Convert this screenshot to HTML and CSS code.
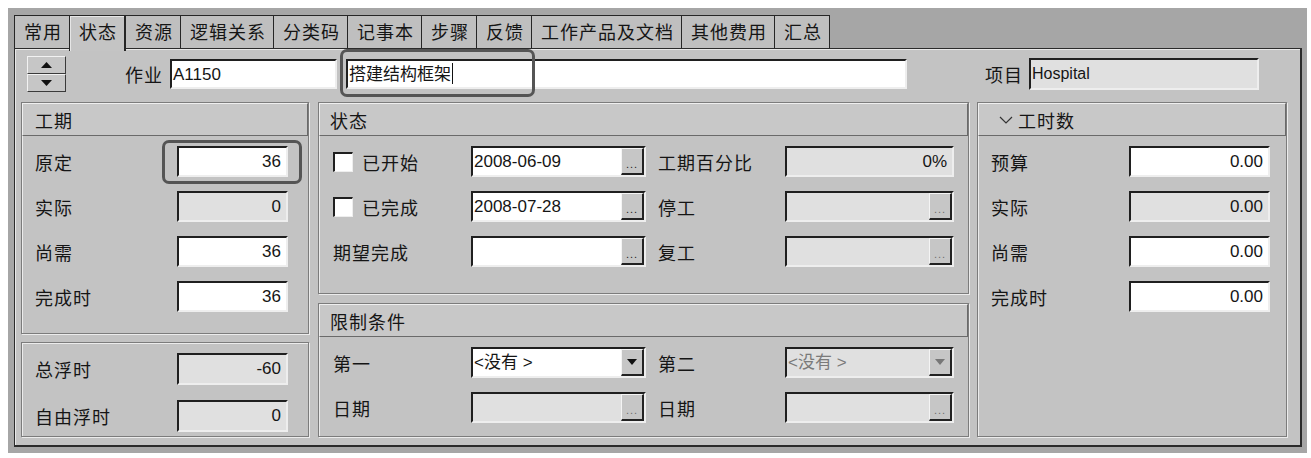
FILE: index.html
```html
<!DOCTYPE html>
<html lang="zh-CN">
<head>
    <meta charset="UTF-8">
    <meta name="viewport" content="width=device-width, initial-scale=1.0">
    <title>作业详情 - 状态</title>
    <link rel="stylesheet" href="styles.css">
</head>
<body>
    <div class="window">
        <div class="tabs">
            <div class="tab">常用</div>
            <div class="tab active">状态</div>
            <div class="tab">资源</div>
            <div class="tab">逻辑关系</div>
            <div class="tab">分类码</div>
            <div class="tab">记事本</div>
            <div class="tab">步骤</div>
            <div class="tab">反馈</div>
            <div class="tab">工作产品及文档</div>
            <div class="tab">其他费用</div>
            <div class="tab">汇总</div>
        </div>

        <div class="panel">
            <div class="topbar">
                <div class="spin">
                    <div class="spin-btn">
                        <svg width="11" height="6" viewBox="0 0 11 6"><polygon points="5.5,0 11,6 0,6" fill="#111"/></svg>
                    </div>
                    <div class="spin-btn">
                        <svg width="11" height="6" viewBox="0 0 11 6"><polygon points="0,0 11,0 5.5,6" fill="#111"/></svg>
                    </div>
                </div>
                <span class="lbl-job">作业</span>
                <div class="field f-id"><span class="val">A1150</span></div>
                <div class="field f-name">
                    <span class="val cjk">搭建结构框架<span class="caret"></span></span>
                    <div class="mark mark-name"></div>
                </div>
                <span class="lbl-proj">项目</span>
                <div class="field disabled f-proj"><span class="val">Hospital</span></div>
            </div>

            <div class="groups">
                <!-- left column -->
                <div class="col col-left">
                    <section class="group g-dur">
                        <div class="group-head">工期</div>
                        <div class="rows">
                            <div class="row">
                                <span class="lbl">原定</span>
                                <div class="field num">
                                    <span class="val">36</span>
                                    <div class="mark mark-dur"></div>
                                </div>
                            </div>
                            <div class="row">
                                <span class="lbl">实际</span>
                                <div class="field num disabled"><span class="val">0</span></div>
                            </div>
                            <div class="row">
                                <span class="lbl">尚需</span>
                                <div class="field num"><span class="val">36</span></div>
                            </div>
                            <div class="row">
                                <span class="lbl">完成时</span>
                                <div class="field num"><span class="val">36</span></div>
                            </div>
                        </div>
                    </section>
                    <section class="group g-float">
                        <div class="rows rows-float">
                            <div class="row">
                                <span class="lbl">总浮时</span>
                                <div class="field num disabled"><span class="val">-60</span></div>
                            </div>
                            <div class="row">
                                <span class="lbl">自由浮时</span>
                                <div class="field num disabled"><span class="val">0</span></div>
                            </div>
                        </div>
                    </section>
                </div>

                <!-- middle column -->
                <div class="col col-mid">
                    <section class="group g-status">
                        <div class="group-head">状态</div>
                        <div class="rows">
                            <div class="row">
                                <span class="lbl"><span class="check"></span>已开始</span>
                                <div class="field date">
                                    <span class="val">2008-06-09</span>
                                    <span class="dots">...</span>
                                </div>
                                <span class="lbl2">工期百分比</span>
                                <div class="field side num disabled"><span class="val">0%</span></div>
                            </div>
                            <div class="row">
                                <span class="lbl"><span class="check"></span>已完成</span>
                                <div class="field date">
                                    <span class="val">2008-07-28</span>
                                    <span class="dots">...</span>
                                </div>
                                <span class="lbl2">停工</span>
                                <div class="field side disabled">
                                    <span class="val"></span>
                                    <span class="dots off">...</span>
                                </div>
                            </div>
                            <div class="row">
                                <span class="lbl">期望完成</span>
                                <div class="field date">
                                    <span class="val"></span>
                                    <span class="dots">...</span>
                                </div>
                                <span class="lbl2">复工</span>
                                <div class="field side disabled">
                                    <span class="val"></span>
                                    <span class="dots off">...</span>
                                </div>
                            </div>
                        </div>
                    </section>
                    <section class="group g-limit">
                        <div class="group-head">限制条件</div>
                        <div class="rows">
                            <div class="row">
                                <span class="lbl">第一</span>
                                <div class="field date">
                                    <span class="val cjk">&lt;没有 &gt;</span>
                                    <span class="drop">
                                        <svg width="10" height="6" viewBox="0 0 10 6"><polygon points="0,0 10,0 5,6" fill="#111"/></svg>
                                    </span>
                                </div>
                                <span class="lbl2">第二</span>
                                <div class="field side disabled">
                                    <span class="val cjk muted">&lt;没有 &gt;</span>
                                    <span class="drop">
                                        <svg width="10" height="6" viewBox="0 0 10 6"><polygon points="0,0 10,0 5,6" fill="#777"/></svg>
                                    </span>
                                </div>
                            </div>
                            <div class="row">
                                <span class="lbl">日期</span>
                                <div class="field date disabled">
                                    <span class="val"></span>
                                    <span class="dots off">...</span>
                                </div>
                                <span class="lbl2">日期</span>
                                <div class="field side disabled">
                                    <span class="val"></span>
                                    <span class="dots off">...</span>
                                </div>
                            </div>
                        </div>
                    </section>
                </div>

                <!-- right column -->
                <div class="col col-right">
                    <section class="group g-hours">
                        <div class="group-head">
                            <svg class="chev" width="14" height="8" viewBox="0 0 14 8"><polyline points="1,1 7,7 13,1" fill="none" stroke="#333" stroke-width="1.2"/></svg>工时数
                        </div>
                        <div class="rows">
                            <div class="row">
                                <span class="lbl">预算</span>
                                <div class="field num"><span class="val">0.00</span></div>
                            </div>
                            <div class="row">
                                <span class="lbl">实际</span>
                                <div class="field num disabled"><span class="val">0.00</span></div>
                            </div>
                            <div class="row">
                                <span class="lbl">尚需</span>
                                <div class="field num"><span class="val">0.00</span></div>
                            </div>
                            <div class="row">
                                <span class="lbl">完成时</span>
                                <div class="field num"><span class="val">0.00</span></div>
                            </div>
                        </div>
                    </section>
                </div>
            </div>
        </div>
    </div>
</body>
</html>
```

FILE: styles.css
```css
body {
    margin: 0;
    background-color: #fff;
    font-family: "Noto Sans CJK SC", sans-serif;
    color: #151515;
}
.window {
    margin: 8px 0 0 8px;
    width: 1299px;
    height: 445px;
    box-sizing: border-box;
    padding: 7px 5px 6px 6px;
    background-color: #a6a6a6;
}

/* tab strip */
.tabs {
    display: flex;
    align-items: flex-start;
    height: 33px;
}
.tab {
    height: 33px;
    box-sizing: border-box;
    padding: 0 7px 0 9px;
    margin-right: -1px;
    border: 1px solid #262626;
    border-bottom: none;
    background-color: #bfbfbf;
    font-size: 18px;
    letter-spacing: 1px;
    line-height: 31px;
}
.tab.active {
    position: relative;
    z-index: 1;
    height: 36px;
    background-color: #c4c4c4;
    border-right-width: 2px;
    box-shadow: inset 1px 1px 0 #e6e6e6;
}

/* main page */
.panel {
    height: 399px;
    box-sizing: border-box;
    border: 1px solid #2b2b2b;
    border-right-width: 2px;
    border-bottom-width: 2px;
    background-color: #c3c3c3;
    box-shadow: inset 1px 1px 0 #e8e8e8;
}
.topbar {
    display: flex;
    align-items: center;
    height: 49px;
}
.spin {
    margin-left: 12px;
    width: 39px;
    height: 36px;
    display: flex;
    flex-direction: column;
}
.spin-btn {
    flex: 1;
    display: flex;
    align-items: center;
    justify-content: center;
    background-color: #c6c6c6;
    border-top: 1px solid #f2f2f2;
    border-left: 1px solid #f2f2f2;
    border-right: 1px solid #3a3a3a;
    border-bottom: 1px solid #3a3a3a;
}
.lbl-job {
    margin-left: 59px;
    width: 45px;
    font-size: 18px;
    letter-spacing: 1px;
}
.lbl-proj {
    margin-left: 78px;
    width: 44px;
    font-size: 18px;
    letter-spacing: 1px;
}

/* sunken edit boxes */
.field {
    position: relative;
    display: flex;
    box-sizing: border-box;
    height: 31px;
    background-color: #fff;
    border-top: 2px solid #1f1f1f;
    border-left: 2px solid #1f1f1f;
    border-right: 2px solid #eeeeee;
    border-bottom: 2px solid #eeeeee;
    font-family: "Liberation Sans", "Noto Sans CJK SC", sans-serif;
    font-size: 17px;
    line-height: 27px;
}
.field .val {
    flex: 1;
    padding: 0 4px 0 1px;
    white-space: nowrap;
    overflow: hidden;
}
.field.num .val {
    text-align: right;
    padding-right: 5px;
}
.field.disabled {
    background-color: #e0e0e0;
}
.field .cjk {
    font-size: 17px;
}
.field .muted {
    color: #7a7a7a;
}
.f-id {
    width: 167px;
    height: 30px;
}
.f-name {
    margin-left: 9px;
    width: 561px;
    height: 30px;
}
.f-proj {
    width: 230px;
    height: 32px;
    font-size: 16px;
}
.caret {
    display: inline-block;
    width: 1px;
    height: 21px;
    margin-left: 1px;
    vertical-align: -4px;
    background-color: #111;
}

/* small buttons inside boxes */
.dots,
.drop {
    width: 23px;
    box-sizing: border-box;
    display: flex;
    justify-content: center;
    background-color: #c6c6c6;
    border-top: 1px solid #f4f4f4;
    border-left: 1px solid #f4f4f4;
    border-right: 2px solid #222;
    border-bottom: 2px solid #222;
}
.dots {
    align-items: flex-end;
    font-size: 11px;
    line-height: 1;
    letter-spacing: 1px;
    padding-bottom: 3px;
    color: #222;
}
.dots.off {
    color: #6e6e6e;
}
.drop {
    align-items: center;
}

/* annotation outlines */
.mark {
    position: absolute;
    border: 3px solid #555;
    border-radius: 7px;
    pointer-events: none;
}
.mark-name {
    left: -8px;
    top: -12px;
    width: 195px;
    height: 48px;
    box-sizing: border-box;
}
.mark-dur {
    left: -17px;
    top: -8px;
    right: -16px;
    bottom: -9px;
}

/* group boxes */
.groups {
    display: flex;
    margin-top: 4px;
    padding-left: 6px;
}
.col {
    display: flex;
    flex-direction: column;
}
.col-left {
    width: 288px;
    gap: 8px;
}
.col-mid {
    width: 651px;
    margin-left: 9px;
    gap: 9px;
}
.col-right {
    width: 310px;
    margin-left: 8px;
}
.group {
    box-sizing: border-box;
    border: 1px solid #7c7c7c;
    box-shadow: inset 1px 1px 0 #ececec, 1px 1px 0 #ececec;
}
.g-dur { height: 232px; }
.g-float { height: 95px; }
.g-status { height: 192px; }
.g-limit { height: 134px; }
.g-hours { height: 335px; }

.group-head {
    height: 33px;
    box-sizing: border-box;
    display: flex;
    align-items: center;
    padding-left: 12px;
    background-color: #c8c8c8;
    border-top: 1px solid #efefef;
    border-left: 1px solid #efefef;
    border-bottom: 1px solid #6a6a6a;
    border-right: 1px solid #6a6a6a;
    font-size: 18px;
    letter-spacing: 1px;
}
.g-status .group-head,
.g-limit .group-head {
    padding-left: 10px;
}
.g-hours .group-head {
    padding-left: 20px;
}
.chev {
    margin-right: 5px;
}

.rows {
    display: flex;
    flex-direction: column;
    gap: 14px;
    padding: 10px 0 0 13px;
}
.rows-float {
    gap: 15px;
}
.row {
    display: flex;
    align-items: center;
    height: 31px;
}
.rows-float .row {
    height: 32px;
}
.rows-float .field {
    height: 32px;
}
.lbl,
.lbl2 {
    display: flex;
    align-items: center;
    font-size: 18px;
    letter-spacing: 1px;
}
.lbl {
    width: 142px;
}
.col-left .field {
    width: 111px;
}
.col-mid .rows {
    padding-left: 14px;
}
.col-mid .lbl {
    width: 138px;
}
.col-mid .field.date {
    width: 175px;
}
.lbl2 {
    margin-left: 12px;
    width: 127px;
}
.col-mid .field.side {
    width: 169px;
}
.col-mid .field .val {
    padding-right: 0;
}
.col-mid .field.num .val {
    padding-right: 5px;
}
.col-right .lbl {
    width: 138px;
}
.col-right .field {
    width: 141px;
}
.check {
    width: 20px;
    height: 20px;
    box-sizing: border-box;
    margin-right: 9px;
    background-color: #fff;
    border-top: 2px solid #1f1f1f;
    border-left: 2px solid #1f1f1f;
    border-right: 1px solid #eee;
    border-bottom: 1px solid #eee;
}
```
